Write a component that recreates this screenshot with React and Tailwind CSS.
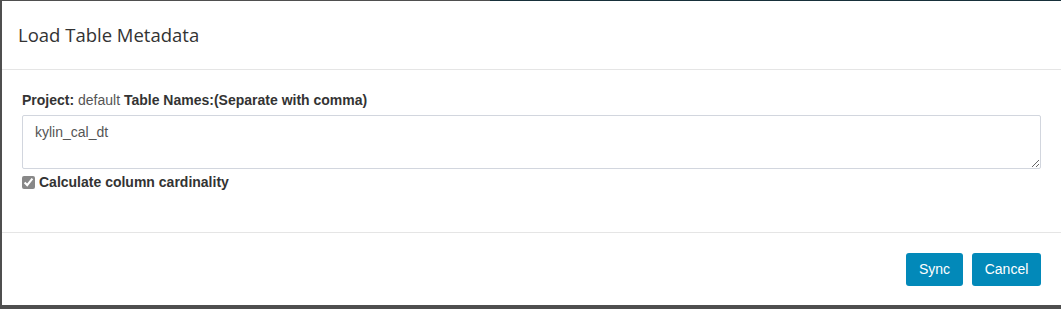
import { useState } from "react";

const App = () => {
  const [tableNames, setTableNames] = useState("kylin_cal_dt");
  const [calcCardinality, setCalcCardinality] = useState(true);

  return (
    <div className="h-[309px] w-[1061px] overflow-hidden bg-[#4f4f4f]">
      {/* backdrop edge: top bar of the page behind */}
      <div className="flex h-px">
        <div className="w-[490px] bg-[#4f4f4f]" />
        <div className="flex-1 bg-[#17303a]" />
      </div>

      <div className="ml-[2px] h-[304px] bg-white font-['Liberation_Sans',Arial,sans-serif] text-[14px] text-[#333]">
        <div className="flex h-[69px] items-center border-b border-[#e5e5e5] px-4">
          <h4 className="font-['Open_Sans',sans-serif] text-[18.5px] font-normal text-[#333]">
            Load Table Metadata
          </h4>
        </div>

        <div className="h-[162px] px-5 pt-[21px]">
          <label className="block h-[18px] leading-[18px]">
            <b>Project:</b> <span className="text-[#555]">default</span>{" "}
            <b>Table Names:(Separate with comma)</b>
          </label>
          <textarea
            value={tableNames}
            onChange={(event) => setTableNames(event.target.value)}
            className="mt-[6px] block h-[54px] w-full resize-y rounded-[2px] border border-[#d2d6de] px-3 py-[6px] text-[14px] leading-[20px] text-[#555] outline-none"
          />
          <label className="mt-[4px] flex items-center gap-[4px] font-bold leading-[18px]">
            <input
              type="checkbox"
              checked={calcCardinality}
              onChange={(event) => setCalcCardinality(event.target.checked)}
              className="m-0 h-[13px] w-[13px] accent-[#888]"
            />
            Calculate column cardinality
          </label>
        </div>

        <div className="flex h-[73px] items-center justify-end gap-[9px] border-t border-[#e5e5e5] px-5">
          <button
            type="button"
            className="h-[33px] w-[57px] rounded-[3px] bg-[#0289b9] text-[14px] text-white"
          >
            Sync
          </button>
          <button
            type="button"
            className="h-[33px] w-[69px] rounded-[3px] bg-[#0289b9] text-[14px] text-white"
          >
            Cancel
          </button>
        </div>
      </div>
    </div>
  );
};

export default App;
